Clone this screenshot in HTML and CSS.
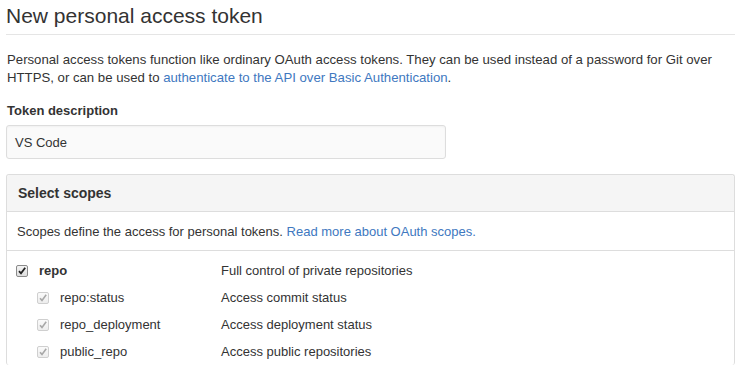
FILE: index.html
```html
<!DOCTYPE html>
<html>
<head>
<meta charset="utf-8">
<link rel="stylesheet" href="styles.css">
</head>
<body>
<div class="page">
  <h1 class="title">New personal access token</h1>
  <p class="intro">Personal access tokens function like ordinary OAuth access tokens. They can be used instead of a password for Git over HTTPS, or can be used to <a href="#" class="link">authenticate to the API over Basic Authentication</a>.</p>
  <label class="field-label">Token description</label>
  <div class="input">VS Code</div>
  <div class="box">
    <div class="box-header">Select scopes</div>
    <div class="box-row">Scopes define the access for personal tokens.&nbsp;<a href="#" class="link">Read more about OAuth scopes.</a></div>
    <div class="scopes">
      <div class="scope">
        <div class="scope-name main"><span class="cb"><svg viewBox="0 0 12 12" width="12" height="12"><path d="M3 6.2 L5 8.4 L9.2 2.8" fill="none" stroke="#222" stroke-width="1.8"/></svg></span><b>repo</b></div>
        <div class="scope-desc">Full control of private repositories</div>
      </div>
      <div class="scope">
        <div class="scope-name sub"><span class="cb off"><svg viewBox="0 0 12 12" width="12" height="12"><path d="M3 6.2 L5 8.4 L9.2 2.8" fill="none" stroke="#a8a8a8" stroke-width="1.6"/></svg></span>repo:status</div>
        <div class="scope-desc">Access commit status</div>
      </div>
      <div class="scope">
        <div class="scope-name sub"><span class="cb off"><svg viewBox="0 0 12 12" width="12" height="12"><path d="M3 6.2 L5 8.4 L9.2 2.8" fill="none" stroke="#a8a8a8" stroke-width="1.6"/></svg></span>repo_deployment</div>
        <div class="scope-desc">Access deployment status</div>
      </div>
      <div class="scope">
        <div class="scope-name sub"><span class="cb off"><svg viewBox="0 0 12 12" width="12" height="12"><path d="M3 6.2 L5 8.4 L9.2 2.8" fill="none" stroke="#a8a8a8" stroke-width="1.6"/></svg></span>public_repo</div>
        <div class="scope-desc">Access public repositories</div>
      </div>
    </div>
  </div>
</div>
</body>
</html>
```
FILE: styles.css
```css
html, body {
  margin: 0;
  padding: 0;
  background: #fff;
}
body {
  font-family: "Liberation Sans", Arial, sans-serif;
  font-size: 13px;
  color: #333;
}
.page {
  padding: 0 6px;
  height: 368px;
  overflow: hidden;
}
.title {
  margin: 0;
  font-weight: normal;
  font-size: 21px;
  line-height: 31px;
  height: 35px;
  box-sizing: border-box;
  border-bottom: 1px solid #e5e5e5;
  color: #333;
}
.intro {
  margin: 16px 0 0 1px;
  font-size: 13.2px;
  line-height: 18px;
}
.link {
  color: #4078c0;
  text-decoration: none;
}
.field-label {
  display: block;
  margin: 15px 0 0 1px;
  font-weight: bold;
  font-size: 13px;
  line-height: 18px;
}
.input {
  margin-top: 5px;
  width: 440px;
  height: 34px;
  box-sizing: border-box;
  border: 1px solid #ddd;
  border-radius: 3px;
  background: #fafafa;
  padding: 0 8px;
  display: flex;
  align-items: center;
  font-size: 13px;
  box-shadow: inset 0 1px 2px rgba(0,0,0,0.04);
}
.box {
  margin-top: 15px;
  border: 1px solid #ddd;
  border-radius: 3px;
  border-bottom: none;
}
.box-header {
  background: #f5f5f5;
  height: 36px;
  display: flex;
  align-items: center;
  padding-left: 11px;
  font-weight: bold;
  font-size: 14px;
  border-bottom: 1px solid #ddd;
  border-radius: 3px 3px 0 0;
}
.box-row {
  height: 38px;
  display: flex;
  align-items: center;
  padding-left: 10px;
  border-bottom: 1px solid #ddd;
}
.scopes {
  padding: 6px 0 0 9px;
}
.scope {
  display: grid;
  grid-template-columns: 205px 1fr;
  height: 27px;
  align-items: center;
}
.scope-name {
  display: flex;
  align-items: center;
}
.scope-name.sub {
  padding-left: 21px;
}
.scope-name b {
  font-weight: bold;
}
.cb {
  width: 12px;
  height: 12px;
  box-sizing: border-box;
  border: 1px solid #8a8a8a;
  border-radius: 2px;
  background: linear-gradient(#f4f4f4, #dedede);
  margin-right: 11px;
  position: relative;
  display: inline-block;
}
.cb svg {
  position: absolute;
  left: -1px;
  top: -1px;
}
.cb.off {
  border-color: #cfcfcf;
  background: linear-gradient(#fafafa, #ededed);
}
.scope-desc {
  color: #333;
}
```
